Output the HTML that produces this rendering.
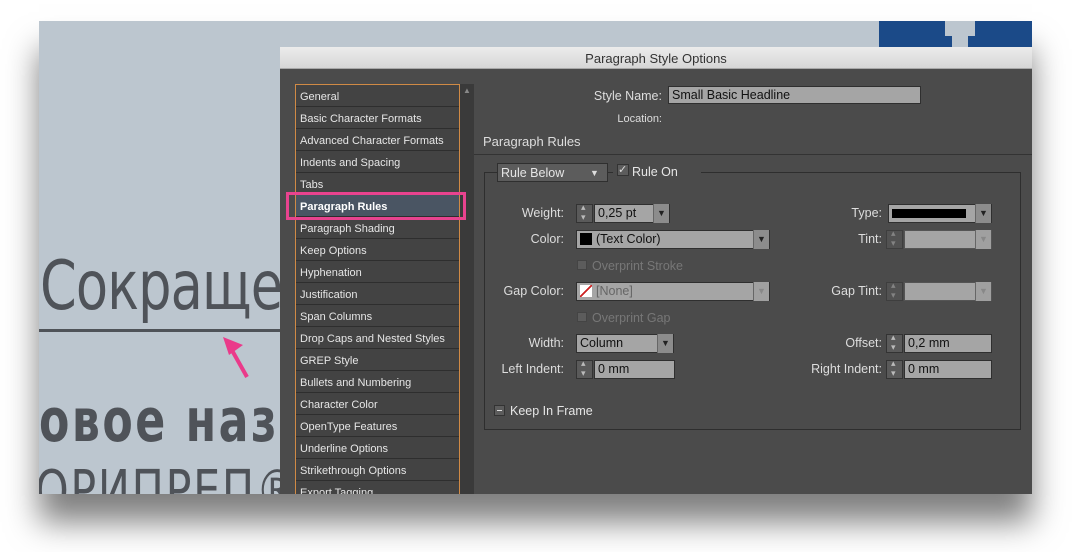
<!DOCTYPE html>
<html><head><meta charset="utf-8"><style>
*{margin:0;padding:0;box-sizing:border-box}
body{width:1072px;height:552px;background:#fff;position:relative;overflow:hidden;font-family:"Liberation Sans","DejaVu Sans",sans-serif;}
.a{position:absolute}
#bg{left:39px;top:21px;width:993px;height:473px;background:#bcc6cf;box-shadow:0 28px 30px rgba(0,0,0,.5);overflow:hidden}
#dlg{left:280px;top:47px;width:752px;height:447px;background:#4b4b4b;overflow:hidden}
#title{left:0;top:0;width:752px;height:22px;background:linear-gradient(#ececec,#d6d6d6);border-bottom:1px solid #a8a8a8;font-size:13px;color:#333;text-align:center;line-height:23px}
#list{left:15px;top:37px;width:165px;height:420px;border:1px solid #d08a45;background:#3f3f3f}
.it{height:22px;border-bottom:1px solid #2e2e2e;background:#434343;color:#e6e6e6;font-size:11px;line-height:24px;padding-left:4px;white-space:nowrap}
.sel{background:#4a5563;color:#fff;font-weight:bold}
#sb{left:180px;top:37px;width:14px;height:420px;background:#3a3a3a}
.lbl{color:#ddd;font-size:12.5px;text-align:right;white-space:nowrap}
.fld{background:#a5a5a5;border:1px solid #2f2f2f;color:#111;font-size:12.5px;line-height:17px;padding-left:3px;height:19px;white-space:nowrap}
.dis{color:#777}
.spin{width:17px;height:19px;background:#5a5a5a;border:1px solid #333}
.spin:before{content:"▴";position:absolute;left:4px;top:-3px;color:#bbb;font-size:9px}
.spin:after{content:"▾";position:absolute;left:4px;top:7px;color:#bbb;font-size:9px}
.dd{width:16px;height:19px;background:#8c8c8c;border-left:1px solid #666;color:#222;font-size:9px;text-align:center;line-height:18px}
</style></head><body>
<div id="bg" class="a">
 <div class="a" style="left:840px;top:0;width:153px;height:26px;background:#1b4a88"></div>
 <div class="a" style="left:906px;top:0;width:30px;height:15px;background:#bcc6cf"></div>
 <div class="a" style="left:913px;top:14px;width:16px;height:12px;background:#bcc6cf"></div>
 <div class="a" style="left:1px;top:226px;font-size:68px;color:#4f5359;font-family:'DejaVu Sans Condensed','Liberation Sans Narrow',sans-serif;font-weight:200;transform:scaleX(.86);transform-origin:left;letter-spacing:-1px;white-space:nowrap">Сокращение</div>
 <div class="a" style="left:0;top:308px;width:245px;height:3px;background:#4f5359"></div>
 <div class="a" style="left:0;top:365px;font-size:60px;color:#4f5359;font-weight:bold;font-family:'DejaVu Sans Condensed',sans-serif;transform:scaleX(.82);transform-origin:left;letter-spacing:3px;white-space:nowrap">овое название</div>
 <div class="a" style="left:-4px;top:438px;font-size:56px;color:#4f5359;font-family:'DejaVu Sans Condensed',sans-serif;transform:scaleX(.85);transform-origin:left;letter-spacing:2px;white-space:nowrap">ОРИПРЕП®</div>
 <svg class="a" style="left:180px;top:312px" width="40" height="50"><path d="M28 44 L10 12" stroke="#ea3a8a" stroke-width="4"/><path d="M4 4 L24 12 L10 22 Z" fill="#ea3a8a"/></svg>
</div>
<div id="dlg" class="a">
 <div id="title" class="a">Paragraph Style Options</div>
 <div id="list" class="a">
  <div class="it">General</div><div class="it">Basic Character Formats</div><div class="it">Advanced Character Formats</div><div class="it">Indents and Spacing</div><div class="it">Tabs</div><div class="it sel">Paragraph Rules</div><div class="it">Paragraph Shading</div><div class="it">Keep Options</div><div class="it">Hyphenation</div><div class="it">Justification</div><div class="it">Span Columns</div><div class="it">Drop Caps and Nested Styles</div><div class="it">GREP Style</div><div class="it">Bullets and Numbering</div><div class="it">Character Color</div><div class="it">OpenType Features</div><div class="it">Underline Options</div><div class="it">Strikethrough Options</div><div class="it">Export Tagging</div>
 </div>
 <div id="sb" class="a"><div class="a" style="left:3px;top:2px;color:#888;font-size:8px">▲</div></div>
 <div class="a" style="left:6px;top:145px;width:180px;height:28px;border:3px solid #e8438f"></div>
 <div class="a lbl" style="left:300px;top:42px;width:82px">Style Name:</div>
 <div class="a fld" style="left:388px;top:39px;width:253px;height:18px;line-height:17px">Small Basic Headline</div>
 <div class="a lbl" style="left:300px;top:66px;width:82px;font-size:11px">Location:</div>
 <div class="a" style="left:203px;top:87px;color:#ddd;font-size:13px">Paragraph Rules</div>
 <div class="a" style="left:194px;top:107px;width:558px;height:1px;background:#333"></div>
 <div class="a" style="left:204px;top:125px;width:537px;height:258px;border:1px solid #2e2e2e"></div>
 <div class="a" style="left:217px;top:116px;width:111px;height:19px;background:#5c5c5c;border:1px solid #2f2f2f;color:#e6e6e6;font-size:12.5px;line-height:18px;padding-left:3px">Rule Below<span class="a" style="left:92px;top:0;color:#ddd;font-size:9px">▼</span></div>
 <div class="a" style="left:333px;top:115px;width:88px;height:20px;background:#4b4b4b"></div>
 <div class="a" style="left:337px;top:117px;width:12px;height:12px;background:#5c5c5c;border:1px solid #333;color:#ddd;font-size:11px;line-height:10px">✓</div>
 <div class="a" style="left:352px;top:118px;color:#e6e6e6;font-size:12.5px">Rule On</div>

 <div class="a lbl" style="left:200px;top:159px;width:84px">Weight:</div>
 <div class="a spin" style="left:296px;top:157px"></div>
 <div class="a fld" style="left:314px;top:157px;width:76px">0,25 pt<div class="a dd" style="right:0;top:-1px">▼</div></div>
 <div class="a lbl" style="left:200px;top:185px;width:84px">Color:</div>
 <div class="a fld" style="left:296px;top:183px;width:194px"><span style="display:inline-block;width:12px;height:12px;background:#000;vertical-align:-2px;margin-right:4px"></span>(Text Color)<div class="a dd" style="right:0;top:-1px">▼</div></div>
 <div class="a" style="left:297px;top:213px;width:10px;height:10px;background:#5c5c5c;border:1px solid #444"></div>
 <div class="a dis" style="left:312px;top:212px;font-size:12.5px">Overprint Stroke</div>
 <div class="a lbl" style="left:200px;top:237px;width:84px">Gap Color:</div>
 <div class="a fld" style="left:296px;top:235px;width:194px;color:#666"><span style="display:inline-block;width:12px;height:12px;vertical-align:-2px;margin-right:4px;background:linear-gradient(135deg,#fff 44%,#c22 45%,#c22 55%,#fff 56%)"></span>[None]<div class="a dd" style="right:0;top:-1px;background:#a0a0a0;color:#888">▼</div></div>
 <div class="a" style="left:297px;top:265px;width:10px;height:10px;background:#5c5c5c;border:1px solid #444"></div>
 <div class="a dis" style="left:312px;top:264px;font-size:12.5px">Overprint Gap</div>
 <div class="a lbl" style="left:200px;top:289px;width:84px">Width:</div>
 <div class="a fld" style="left:296px;top:287px;width:98px">Column<div class="a dd" style="right:0;top:-1px">▼</div></div>
 <div class="a lbl" style="left:200px;top:315px;width:84px">Left Indent:</div>
 <div class="a spin" style="left:296px;top:313px"></div>
 <div class="a fld" style="left:314px;top:313px;width:81px">0 mm</div>

 <div class="a lbl" style="left:520px;top:159px;width:82px">Type:</div>
 <div class="a fld" style="left:608px;top:157px;width:104px"><span class="a" style="left:3px;top:4px;width:74px;height:9px;background:#000"></span><div class="a dd" style="right:0;top:-1px">▼</div></div>
 <div class="a lbl" style="left:520px;top:185px;width:82px">Tint:</div>
 <div class="a spin" style="left:606px;top:183px;opacity:.5"></div>
 <div class="a fld" style="left:624px;top:183px;width:88px;border-color:#555"><div class="a dd" style="right:0;top:-1px;background:#a0a0a0;color:#888">▼</div></div>
 <div class="a lbl" style="left:500px;top:237px;width:102px">Gap Tint:</div>
 <div class="a spin" style="left:606px;top:235px;opacity:.5"></div>
 <div class="a fld" style="left:624px;top:235px;width:88px;border-color:#555"><div class="a dd" style="right:0;top:-1px;background:#a0a0a0;color:#888">▼</div></div>
 <div class="a lbl" style="left:520px;top:289px;width:82px">Offset:</div>
 <div class="a spin" style="left:606px;top:287px"></div>
 <div class="a fld" style="left:624px;top:287px;width:88px">0,2 mm</div>
 <div class="a lbl" style="left:500px;top:315px;width:102px">Right Indent:</div>
 <div class="a spin" style="left:606px;top:313px"></div>
 <div class="a fld" style="left:624px;top:313px;width:88px">0 mm</div>

 <div class="a" style="left:214px;top:358px;width:11px;height:11px;background:#5c5c5c;border:1px solid #333"><div class="a" style="left:2px;top:4px;width:5px;height:1px;background:#ddd"></div></div>
 <div class="a" style="left:230px;top:357px;color:#e6e6e6;font-size:12.5px">Keep In Frame</div>
</div>
</body></html>
